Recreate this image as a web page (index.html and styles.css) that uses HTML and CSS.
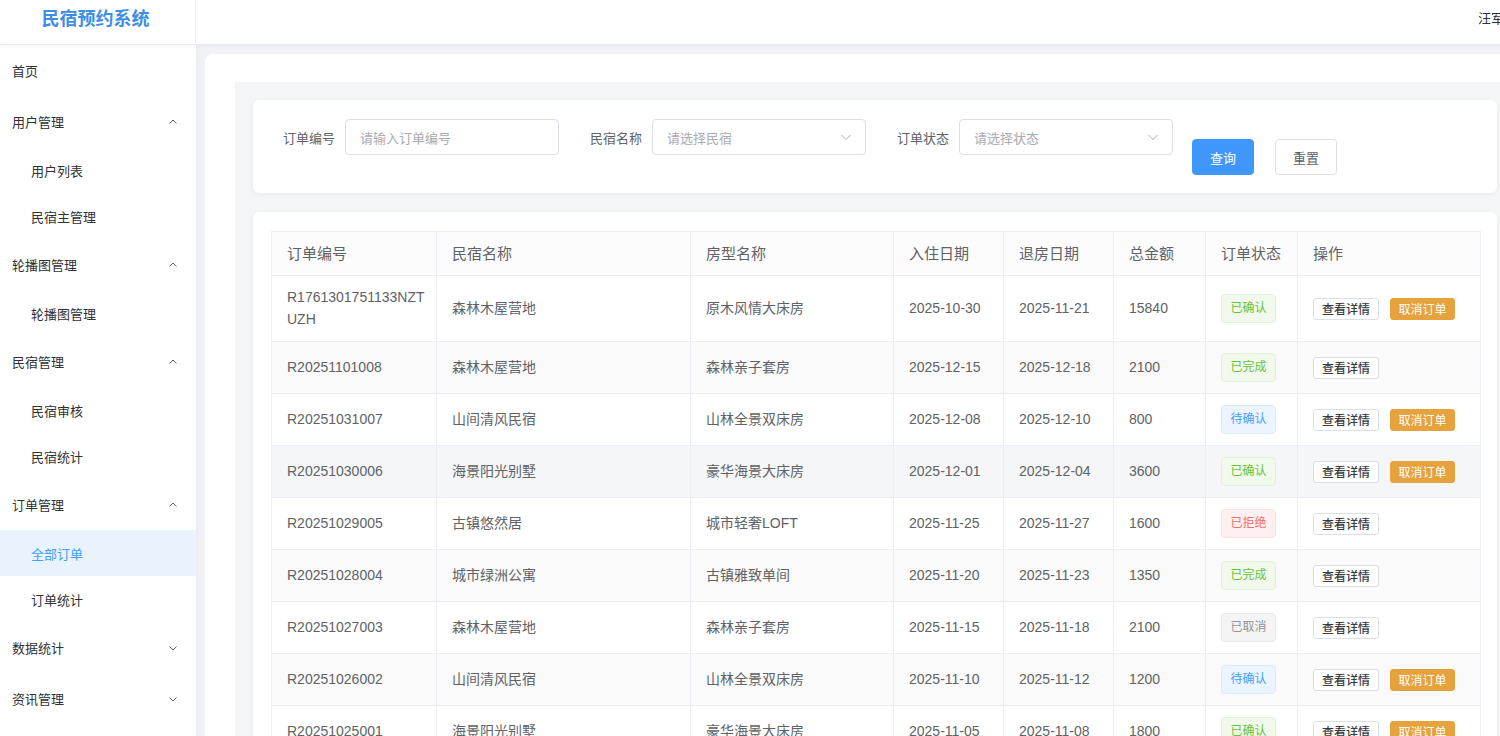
FILE: index.html
```html
<!DOCTYPE html>
<html>
<head>
    <meta charset="utf-8">
    <meta name="viewport" content="width=device-width, initial-scale=1.0">
    <link rel="stylesheet" href="styles.css">
</head>
<body>
<div class="layout">
    <!-- Top bar -->
    <header class="topbar">
        <div class="logo">民宿预约系统</div>
        <div class="topbar-right">
            <span class="user">汪军</span>
        </div>
    </header>

    <div class="body-wrap">
        <!-- Side menu -->
        <aside class="sidebar">
            <div class="menu-item">首页</div>

            <div class="menu-item">用户管理
                <svg class="chev" viewBox="0 0 10 10"><polyline points="1.5,6.5 5,3 8.5,6.5"/></svg>
            </div>
            <div class="sub-item">用户列表</div>
            <div class="sub-item">民宿主管理</div>

            <div class="menu-item">轮播图管理
                <svg class="chev" viewBox="0 0 10 10"><polyline points="1.5,6.5 5,3 8.5,6.5"/></svg>
            </div>
            <div class="sub-item">轮播图管理</div>

            <div class="menu-item">民宿管理
                <svg class="chev" viewBox="0 0 10 10"><polyline points="1.5,6.5 5,3 8.5,6.5"/></svg>
            </div>
            <div class="sub-item">民宿审核</div>
            <div class="sub-item">民宿统计</div>

            <div class="menu-item">订单管理
                <svg class="chev" viewBox="0 0 10 10"><polyline points="1.5,6.5 5,3 8.5,6.5"/></svg>
            </div>
            <div class="sub-item active">全部订单</div>
            <div class="sub-item">订单统计</div>

            <div class="menu-item">数据统计
                <svg class="chev" viewBox="0 0 10 10"><polyline points="1.5,3.5 5,7 8.5,3.5"/></svg>
            </div>
            <div class="menu-item">资讯管理
                <svg class="chev" viewBox="0 0 10 10"><polyline points="1.5,3.5 5,7 8.5,3.5"/></svg>
            </div>
        </aside>

        <main class="main">
            <div class="panel">
                <div class="page">
                    <!-- Search form -->
                    <div class="card search-card">
                        <div class="form-item">
                            <label>订单编号</label>
                            <div class="input"><span class="placeholder">请输入订单编号</span></div>
                        </div>
                        <div class="form-item">
                            <label>民宿名称</label>
                            <div class="input select">
                                <span class="placeholder">请选择民宿</span>
                                <svg class="select-arrow" viewBox="0 0 12 12"><polyline points="1.5,4 6,8.5 10.5,4"/></svg>
                            </div>
                        </div>
                        <div class="form-item">
                            <label>订单状态</label>
                            <div class="input select">
                                <span class="placeholder">请选择状态</span>
                                <svg class="select-arrow" viewBox="0 0 12 12"><polyline points="1.5,4 6,8.5 10.5,4"/></svg>
                            </div>
                        </div>
                        <div class="form-btns">
                            <button class="btn btn-primary">查询</button>
                            <button class="btn">重置</button>
                        </div>
                    </div>

                    <!-- Order table -->
                    <div class="card table-card">
                        <table class="order-table">
                            <colgroup>
                                <col class="c-no">
                                <col class="c-house">
                                <col class="c-room">
                                <col class="c-date">
                                <col class="c-date">
                                <col class="c-amount">
                                <col class="c-status">
                                <col class="c-ops">
                            </colgroup>
                            <thead>
                                <tr>
                                    <th>订单编号</th>
                                    <th>民宿名称</th>
                                    <th>房型名称</th>
                                    <th>入住日期</th>
                                    <th>退房日期</th>
                                    <th>总金额</th>
                                    <th>订单状态</th>
                                    <th>操作</th>
                                </tr>
                            </thead>
                            <tbody>
                                <tr>
                                    <td>R1761301751133NZTUZH</td>
                                    <td>森林木屋营地</td>
                                    <td>原木风情大床房</td>
                                    <td>2025-10-30</td>
                                    <td>2025-11-21</td>
                                    <td>15840</td>
                                    <td><span class="tag tag-success">已确认</span></td>
                                    <td><button class="mini-btn">查看详情</button><button class="mini-btn mini-warning">取消订单</button></td>
                                </tr>
                                <tr class="stripe">
                                    <td>R20251101008</td>
                                    <td>森林木屋营地</td>
                                    <td>森林亲子套房</td>
                                    <td>2025-12-15</td>
                                    <td>2025-12-18</td>
                                    <td>2100</td>
                                    <td><span class="tag tag-success">已完成</span></td>
                                    <td><button class="mini-btn">查看详情</button></td>
                                </tr>
                                <tr>
                                    <td>R20251031007</td>
                                    <td>山间清风民宿</td>
                                    <td>山林全景双床房</td>
                                    <td>2025-12-08</td>
                                    <td>2025-12-10</td>
                                    <td>800</td>
                                    <td><span class="tag tag-primary">待确认</span></td>
                                    <td><button class="mini-btn">查看详情</button><button class="mini-btn mini-warning">取消订单</button></td>
                                </tr>
                                <tr class="hover">
                                    <td>R20251030006</td>
                                    <td>海景阳光别墅</td>
                                    <td>豪华海景大床房</td>
                                    <td>2025-12-01</td>
                                    <td>2025-12-04</td>
                                    <td>3600</td>
                                    <td><span class="tag tag-success">已确认</span></td>
                                    <td><button class="mini-btn">查看详情</button><button class="mini-btn mini-warning">取消订单</button></td>
                                </tr>
                                <tr>
                                    <td>R20251029005</td>
                                    <td>古镇悠然居</td>
                                    <td>城市轻奢LOFT</td>
                                    <td>2025-11-25</td>
                                    <td>2025-11-27</td>
                                    <td>1600</td>
                                    <td><span class="tag tag-danger">已拒绝</span></td>
                                    <td><button class="mini-btn">查看详情</button></td>
                                </tr>
                                <tr class="stripe">
                                    <td>R20251028004</td>
                                    <td>城市绿洲公寓</td>
                                    <td>古镇雅致单间</td>
                                    <td>2025-11-20</td>
                                    <td>2025-11-23</td>
                                    <td>1350</td>
                                    <td><span class="tag tag-success">已完成</span></td>
                                    <td><button class="mini-btn">查看详情</button></td>
                                </tr>
                                <tr>
                                    <td>R20251027003</td>
                                    <td>森林木屋营地</td>
                                    <td>森林亲子套房</td>
                                    <td>2025-11-15</td>
                                    <td>2025-11-18</td>
                                    <td>2100</td>
                                    <td><span class="tag tag-info">已取消</span></td>
                                    <td><button class="mini-btn">查看详情</button></td>
                                </tr>
                                <tr class="stripe">
                                    <td>R20251026002</td>
                                    <td>山间清风民宿</td>
                                    <td>山林全景双床房</td>
                                    <td>2025-11-10</td>
                                    <td>2025-11-12</td>
                                    <td>1200</td>
                                    <td><span class="tag tag-primary">待确认</span></td>
                                    <td><button class="mini-btn">查看详情</button><button class="mini-btn mini-warning">取消订单</button></td>
                                </tr>
                                <tr>
                                    <td>R20251025001</td>
                                    <td>海景阳光别墅</td>
                                    <td>豪华海景大床房</td>
                                    <td>2025-11-05</td>
                                    <td>2025-11-08</td>
                                    <td>1800</td>
                                    <td><span class="tag tag-success">已确认</span></td>
                                    <td><button class="mini-btn">查看详情</button><button class="mini-btn mini-warning">取消订单</button></td>
                                </tr>
                            </tbody>
                        </table>
                    </div>
                </div>
            </div>
        </main>
    </div>
</div>
</body>
</html>
```

FILE: styles.css
```css
html,
body {
    margin: 0;
    height: 100%;
    overflow: hidden;
}

body {
    background-color: #f0f2f5;
    color: #303133;
    font-family: "Liberation Sans", "Noto Sans CJK SC", sans-serif;
    font-size: 14px;
}

.layout {
    width: 1546px;
    height: 100%;
    display: flex;
    flex-direction: column;
}

/* Top bar */
.topbar {
    height: 45px;
    box-sizing: border-box;
    flex: none;
    display: flex;
    align-items: center;
    background-color: white;
    border-bottom: 1px solid #e9ebef;
    box-shadow: 0 1px 4px rgba(0, 0, 0, 0.04);
    position: relative;
    z-index: 2;
}

.logo {
    width: 196px;
    height: 100%;
    box-sizing: border-box;
    border-right: 1px solid #eef0f3;
    display: flex;
    align-items: center;
    justify-content: center;
    color: #3d8ee6;
    font-size: 18px;
    font-weight: 600;
    padding: 0 4px 10px 0;
}

.topbar-right {
    flex: 1;
    display: flex;
    justify-content: flex-end;
    align-items: center;
    height: 100%;
    padding-bottom: 10px;
    box-sizing: border-box;
}

.user {
    font-size: 13px;
    color: #303133;
    margin-right: 42px;
}

.body-wrap {
    flex: 1;
    display: flex;
    min-height: 0;
}

/* Side menu */
.sidebar {
    width: 196px;
    flex: none;
    background-color: white;
    box-shadow: 1px 0 4px rgba(0, 0, 0, 0.04);
    font-size: 13px;
    color: #303133;
    position: relative;
    z-index: 1;
}

.menu-item {
    height: 51px;
    display: flex;
    align-items: center;
    justify-content: space-between;
    padding: 0 18px 0 12px;
}

.sub-item {
    height: 46px;
    display: flex;
    align-items: center;
    padding-left: 31px;
}

.sub-item.active {
    background-color: #e8f3fe;
    color: #409eff;
}

.chev {
    width: 10px;
    height: 10px;
    fill: none;
    stroke: #606266;
    stroke-width: 1;
}

/* Content */
.main {
    flex: 1;
    padding: 9px 0 0 9px;
    min-width: 0;
}

.panel {
    width: 1340px;
    height: 100%;
    box-sizing: border-box;
    background-color: white;
    border-radius: 8px 0 0 0;
    padding: 28px 30px;
}

.page {
    background-color: #f4f5f7;
    padding: 18px;
    height: 100%;
}

.card {
    background-color: white;
    border-radius: 6px;
    box-shadow: 0 1px 5px rgba(0, 0, 0, 0.06);
}

/* Search form */
.search-card {
    display: flex;
    align-items: flex-start;
    padding: 19px 30px 18px;
    margin-bottom: 19px;
}

.form-item {
    display: flex;
    align-items: center;
    margin-bottom: 18px;
}

.form-item + .form-item {
    margin-left: 31px;
}

.form-item label {
    font-size: 13px;
    color: #606266;
    margin-right: 10px;
}

.input {
    width: 214px;
    height: 36px;
    box-sizing: border-box;
    border: 1px solid #dcdfe6;
    border-radius: 4px;
    display: flex;
    align-items: center;
    justify-content: space-between;
    padding: 0 14px;
}

.placeholder {
    font-size: 13px;
    color: #a8abb2;
}

.select-arrow {
    width: 12px;
    height: 12px;
    fill: none;
    stroke: #a8abb2;
    stroke-width: 1;
    margin-right: -1px;
}

.form-btns {
    margin-left: 19px;
    margin-top: 20px;
    display: flex;
    gap: 21px;
}

.btn {
    height: 36px;
    width: 62px;
    padding: 0;
    font-family: inherit;
    font-size: 13px;
    color: #606266;
    background-color: white;
    border: 1px solid #dcdfe6;
    border-radius: 4px;
}

.btn-primary {
    background-color: #3f96fb;
    border-color: #3f96fb;
    color: white;
}

/* Table */
.table-card {
    padding: 19px 17px 18px 18px;
}

.order-table {
    width: 1209px;
    table-layout: fixed;
    border-collapse: collapse;
    border: 1px solid #ebeef5;
}

.c-no { width: 165px; }
.c-house { width: 254px; }
.c-room { width: 203px; }
.c-date { width: 110px; }
.c-amount { width: 92px; }
.c-status { width: 92px; }
.c-ops { width: 183px; }

.order-table th {
    text-align: left;
    font-weight: normal;
    font-size: 15px;
    color: #606266;
    background-color: #fcfcfd;
    padding: 11px 10px 11px 15px;
    line-height: 21px;
    border: 1px solid #ebeef5;
}

.order-table td {
    font-size: 14px;
    color: #606266;
    padding: 11px 8px 11px 15px;
    line-height: 21.5px;
    border: 1px solid #ebeef5;
    word-break: break-all;
    vertical-align: middle;
}

.order-table tr.stripe td {
    background-color: #fafafa;
}

.order-table tr.hover td {
    background-color: #f5f6f8;
}

.tag {
    display: inline-flex;
    align-items: center;
    justify-content: center;
    width: 55px;
    height: 29px;
    box-sizing: border-box;
    border: 1px solid;
    border-radius: 4px;
    font-size: 12px;
    vertical-align: middle;
}

.tag-success {
    background-color: #f0f9eb;
    border-color: #e1f3d8;
    color: #67c23a;
}

.tag-primary {
    background-color: #ecf5ff;
    border-color: #d9ecff;
    color: #409eff;
}

.tag-danger {
    background-color: #fef0f0;
    border-color: #fde2e2;
    color: #f56c6c;
}

.tag-info {
    background-color: #f4f4f5;
    border-color: #e9e9eb;
    color: #909399;
}

.mini-btn {
    height: 22px;
    width: 66px;
    padding: 0;
    font-family: inherit;
    font-size: 12px;
    font-weight: 500;
    color: #3a3b3e;
    background-color: white;
    border: 1px solid #dcdfe6;
    border-radius: 3px;
    vertical-align: middle;
}

.mini-btn + .mini-btn {
    margin-left: 11px;
}

.mini-warning {
    width: 65px;
    background-color: #e6a23c;
    border-color: #e6a23c;
    color: white;
    font-weight: normal;
}
```
